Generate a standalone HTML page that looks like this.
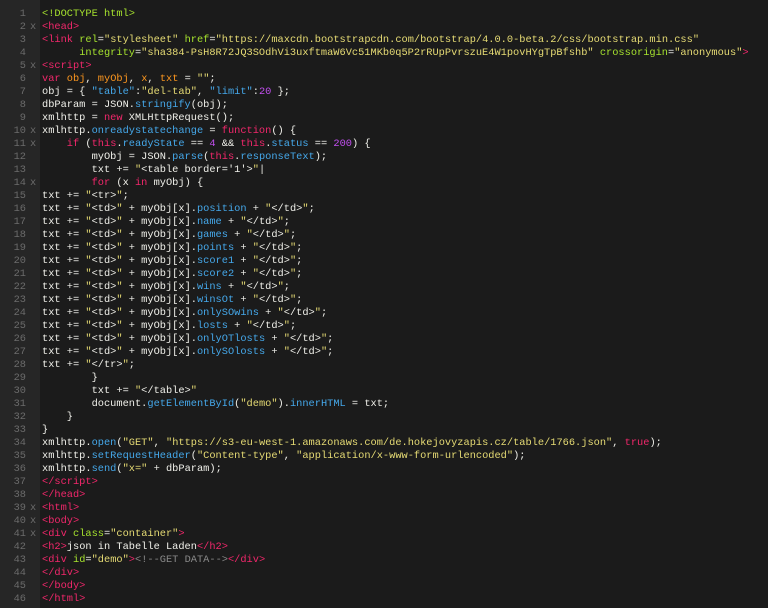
<!DOCTYPE html>
<html><head><meta charset="utf-8"><style>
html,body{margin:0;padding:0;width:768px;height:608px;overflow:hidden;background:#1b1b1b}
.g{position:absolute;left:0;top:0;width:40px;height:608px;background:#262626}
pre{position:absolute;margin:0;top:8px;font-family:"Liberation Mono",monospace;font-size:10.33px;line-height:13px;white-space:pre}
#num{left:0;width:26px;text-align:right;color:#6b6b6b}
#xs{left:30px;color:#6b6b6b}
#code{left:42px;color:#f0f0ea}
.t{color:#f2276b}.a{color:#a6e22e}.s{color:#e6db74}.b{color:#45a8ea}.k{color:#f2276b}.n{color:#c24ff0}.v{color:#fd971f}.c{color:#8a8a8a}.d{color:#a6e22e}
</style></head><body><div class="g"></div>
<pre id="num">1
2
3
4
5
6
7
8
9
10
11
12
13
14
15
16
17
18
19
20
21
22
23
24
25
26
27
28
29
30
31
32
33
34
35
36
37
38
39
40
41
42
43
44
45
46</pre>
<pre id="xs">

x


x




x
x


x
























x
x
x</pre>
<pre id="code"><span class="d">&lt;!DOCTYPE html&gt;</span>
<span class="t">&lt;head&gt;</span>
<span class="t">&lt;link</span> <span class="a">rel</span>=<span class="s">"stylesheet"</span> <span class="a">href</span>=<span class="s">"https://maxcdn.bootstrapcdn.com/bootstrap/4.0.0-beta.2/css/bootstrap.min.css"</span>
      <span class="a">integrity</span>=<span class="s">"sha384-PsH8R72JQ3SOdhVi3uxftmaW6Vc51MKb0q5P2rRUpPvrszuE4W1povHYgTpBfshb"</span> <span class="a">crossorigin</span>=<span class="s">"anonymous"</span><span class="t">&gt;</span>
<span class="t">&lt;script&gt;</span>
<span class="k">var</span> <span class="v">obj</span>, <span class="v">myObj</span>, <span class="v">x</span>, <span class="v">txt</span> = <span class="s">""</span>;
obj = { <span class="b">"table"</span>:<span class="s">"del-tab"</span>, <span class="b">"limit"</span>:<span class="n">20</span> };
dbParam = JSON.<span class="b">stringify</span>(obj);
xmlhttp = <span class="k">new</span> XMLHttpRequest();
xmlhttp.<span class="b">onreadystatechange</span> = <span class="k">function</span>() {
    <span class="k">if</span> (<span class="k">this</span>.<span class="b">readyState</span> == <span class="n">4</span> &amp;&amp; <span class="k">this</span>.<span class="b">status</span> == <span class="n">200</span>) {
        myObj = JSON.<span class="b">parse</span>(<span class="k">this</span>.<span class="b">responseText</span>);
        txt += <span class="s">"</span>&lt;table border='1'&gt;<span class="s">"</span>|
        <span class="k">for</span> (x <span class="k">in</span> myObj) {
txt += <span class="s">"</span>&lt;tr&gt;<span class="s">"</span>;
txt += <span class="s">"</span>&lt;td&gt;<span class="s">"</span> + myObj[x].<span class="b">position</span> + <span class="s">"</span>&lt;/td&gt;<span class="s">"</span>;
txt += <span class="s">"</span>&lt;td&gt;<span class="s">"</span> + myObj[x].<span class="b">name</span> + <span class="s">"</span>&lt;/td&gt;<span class="s">"</span>;
txt += <span class="s">"</span>&lt;td&gt;<span class="s">"</span> + myObj[x].<span class="b">games</span> + <span class="s">"</span>&lt;/td&gt;<span class="s">"</span>;
txt += <span class="s">"</span>&lt;td&gt;<span class="s">"</span> + myObj[x].<span class="b">points</span> + <span class="s">"</span>&lt;/td&gt;<span class="s">"</span>;
txt += <span class="s">"</span>&lt;td&gt;<span class="s">"</span> + myObj[x].<span class="b">score1</span> + <span class="s">"</span>&lt;/td&gt;<span class="s">"</span>;
txt += <span class="s">"</span>&lt;td&gt;<span class="s">"</span> + myObj[x].<span class="b">score2</span> + <span class="s">"</span>&lt;/td&gt;<span class="s">"</span>;
txt += <span class="s">"</span>&lt;td&gt;<span class="s">"</span> + myObj[x].<span class="b">wins</span> + <span class="s">"</span>&lt;/td&gt;<span class="s">"</span>;
txt += <span class="s">"</span>&lt;td&gt;<span class="s">"</span> + myObj[x].<span class="b">winsOt</span> + <span class="s">"</span>&lt;/td&gt;<span class="s">"</span>;
txt += <span class="s">"</span>&lt;td&gt;<span class="s">"</span> + myObj[x].<span class="b">onlySOwins</span> + <span class="s">"</span>&lt;/td&gt;<span class="s">"</span>;
txt += <span class="s">"</span>&lt;td&gt;<span class="s">"</span> + myObj[x].<span class="b">losts</span> + <span class="s">"</span>&lt;/td&gt;<span class="s">"</span>;
txt += <span class="s">"</span>&lt;td&gt;<span class="s">"</span> + myObj[x].<span class="b">onlyOTlosts</span> + <span class="s">"</span>&lt;/td&gt;<span class="s">"</span>;
txt += <span class="s">"</span>&lt;td&gt;<span class="s">"</span> + myObj[x].<span class="b">onlySOlosts</span> + <span class="s">"</span>&lt;/td&gt;<span class="s">"</span>;
txt += <span class="s">"</span>&lt;/tr&gt;<span class="s">"</span>;
        }
        txt += <span class="s">"</span>&lt;/table&gt;<span class="s">"</span>
        document.<span class="b">getElementById</span>(<span class="s">"demo"</span>).<span class="b">innerHTML</span> = txt;
    }
}
xmlhttp.<span class="b">open</span>(<span class="s">"GET"</span>, <span class="s">"https://s3-eu-west-1.amazonaws.com/de.hokejovyzapis.cz/table/1766.json"</span>, <span class="k">true</span>);
xmlhttp.<span class="b">setRequestHeader</span>(<span class="s">"Content-type"</span>, <span class="s">"application/x-www-form-urlencoded"</span>);
xmlhttp.<span class="b">send</span>(<span class="s">"x="</span> + dbParam);
<span class="t">&lt;/script&gt;</span>
<span class="t">&lt;/head&gt;</span>
<span class="t">&lt;html&gt;</span>
<span class="t">&lt;body&gt;</span>
<span class="t">&lt;div</span> <span class="a">class</span>=<span class="s">"container"</span><span class="t">&gt;</span>
<span class="t">&lt;h2&gt;</span>json in Tabelle Laden<span class="t">&lt;/h2&gt;</span>
<span class="t">&lt;div</span> <span class="a">id</span>=<span class="s">"demo"</span><span class="t">&gt;</span><span class="c">&lt;!--GET DATA--&gt;</span><span class="t">&lt;/div&gt;</span>
<span class="t">&lt;/div&gt;</span>
<span class="t">&lt;/body&gt;</span>
<span class="t">&lt;/html&gt;</span></pre>
</body></html>
